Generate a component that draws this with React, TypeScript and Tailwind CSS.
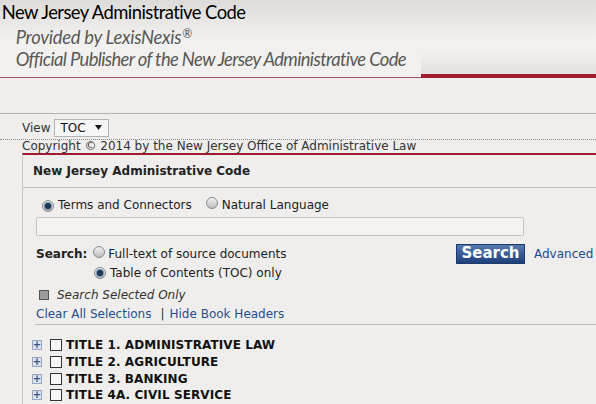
import React from "react";

const body = "font-['DejaVu_Sans','Verdana',sans-serif]";

function Radio({ on = false }: { on?: boolean }) {
  return (
    <span className="inline-flex h-[12px] w-[12px] shrink-0 items-center justify-center rounded-full border border-[#8a8a8a] bg-gradient-to-b from-[#f2f2f2] to-[#bdbdbd]">
      {on && <span className="h-[6px] w-[6px] rounded-full bg-[#1f3550] ring-1 ring-[#7093b8]" />}
    </span>
  );
}

function TreeRow({ label }: { label: string }) {
  return (
    <div className="flex h-[16.7px] items-center">
      <span className="flex h-[10px] w-[10px] items-center justify-center border border-[#9aa6bd] bg-[#dde3ee] text-[10px] leading-none font-bold text-[#3b5684]">
        +
      </span>
      <span className="ml-[8px] h-[12px] w-[12px] border border-[#333] bg-[#f7f7f7]" />
      <span className="ml-[4px] text-[12px] font-bold tracking-[0.1px] text-[#111]">{label}</span>
    </div>
  );
}

export default function App() {
  return (
    <div className={`h-[404px] w-[596px] overflow-hidden bg-[#efeeec] ${body}`}>
      {/* banner */}
      <div className="flex h-[78px] bg-gradient-to-b from-[#dedcda] via-[#f2f1ef] to-[#f2f1ef]">
        <div className="flex w-[421px] flex-col border-b border-[#a2505c] font-['Lato',sans-serif]">
          <div className="origin-left scale-x-[0.92] whitespace-nowrap pl-[2px] text-[20px] leading-[22px] tracking-[-0.6px] text-black">
            New Jersey Administrative Code
          </div>
          <div className="origin-left scale-x-[0.92] whitespace-nowrap pl-[17px] pt-[4px] text-[20px] leading-[21px] italic tracking-[-0.3px] text-[#5a5856]">
            Provided by LexisNexis<sup className="ml-[1px] text-[13px]">®</sup>
          </div>
          <div className="origin-left scale-x-[0.92] whitespace-nowrap pl-[17px] text-[20px] leading-[22px] italic tracking-[-0.7px] text-[#5a5856]">
            Official Publisher of the New Jersey Administrative Code
          </div>
        </div>
        <div className="flex flex-1 flex-col justify-end">
          <div className="h-[25px] bg-gradient-to-b from-[#f4f3f1] to-[#e2e0dd]" />
          <div className="h-[4px] bg-[#a3192f]" />
        </div>
      </div>

      <div className="mt-[35px] h-[1px] bg-[#b8b5b1]" />

      <div className="flex h-[25px] items-center pt-[2px] pl-[22px] text-[12px] text-[#333]">
        View
        <span className="ml-[4px] flex h-[18px] w-[55px] items-center border border-[#b3b3b3] bg-[#f6f6f6] pl-[5px] text-[12px] text-[#111]">
          TOC
          <svg className="ml-[9px]" width="7" height="5" viewBox="0 0 7 5">
            <path d="M0 0h7L3.5 5z" fill="#111" />
          </svg>
        </span>
      </div>
      <div className="border-t border-dotted border-[#8a8a8a]" />
      <div className="pl-[22px] text-[12px] leading-[13px] text-[#333]">
        Copyright © 2014 by the New Jersey Office of Administrative Law
      </div>

      <div className="ml-[22px] border-t-2 border-l border-t-[#9e1b32] border-l-[#c9c7c4]">
        <div className="flex h-[33px] items-center border-b border-[#c2c0bd] pl-[10px] text-[12px] font-bold text-[#222]">
          New Jersey Administrative Code
        </div>

        <div className="pl-[13px] text-[12px] text-[#222]">
          <div className="mt-[10px] flex h-[14px] items-center">
            <span className="ml-[6px]"><Radio on /></span>
            <span className="ml-[4px]">Terms and Connectors</span>
            <span className="ml-[14px]"><Radio /></span>
            <span className="ml-[4px]">Natural Language</span>
          </div>
          <div className="mt-[5px] h-[19px] w-[488px] rounded-[2px] border border-[#c4c2bf] bg-[#f4f3f1]" />
          <div className="mt-[8px] flex h-[19px] items-center">
            <div className="flex w-[489px] items-center">
              <span className="font-bold">Search:</span>
              <span className="ml-[6px]"><Radio /></span>
              <span className="ml-[3px]">Full-text of source documents</span>
              <span className="ml-auto flex h-[20px] w-[69px] items-center justify-center border border-[#1c3a6e] bg-gradient-to-b from-[#5679b0] to-[#1f3f7a] text-[15px] font-bold text-white">
                Search
              </span>
            </div>
            <span className="ml-[9px] text-[12px] text-[#1c4b8c]">Advanced</span>
          </div>
          <div className="flex h-[19px] items-center pl-[58px]">
            <Radio on />
            <span className="ml-[4px]">Table of Contents (TOC) only</span>
          </div>
          <div className="mt-[3px] flex h-[19px] items-center pl-[3px]">
            <span className="h-[10px] w-[10px] border border-[#555] bg-[#9a9a9a]" />
            <span className="ml-[8px] italic text-[#333]">Search Selected Only</span>
          </div>
          <div className="flex h-[19px] items-center text-[#1f4f8f]">
            <span>Clear All Selections</span>
            <span className="ml-[9px] text-[#333]">|</span>
            <span className="ml-[5px]">Hide Book Headers</span>
          </div>
        </div>
        <div className="ml-[12px] mt-[1px] h-[1px] bg-[#bdbbb8]" />
        <div className="pl-[9px] pt-[12px]">
          <TreeRow label="TITLE 1. ADMINISTRATIVE LAW" />
          <TreeRow label="TITLE 2. AGRICULTURE" />
          <TreeRow label="TITLE 3. BANKING" />
          <TreeRow label="TITLE 4A. CIVIL SERVICE" />
        </div>
      </div>
    </div>
  );
}
